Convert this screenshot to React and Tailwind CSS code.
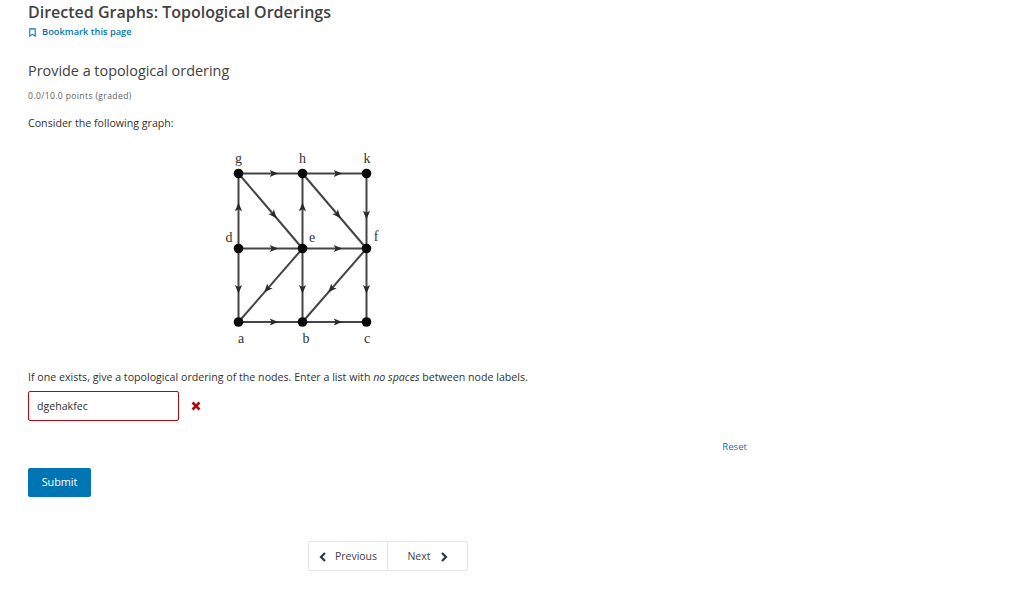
import React from "react";

const N = { g:[28.5,28.5], h:[92.5,28.5], k:[156.5,28.5], d:[28.5,103.5], e:[92.5,103.5], f:[156.5,103.5], a:[28.5,177], b:[92.5,177], c:[156.5,177] };
const E = ["gh","hk","ge","hf","kf","dg","eh","de","ef","da","ea","eb","fb","fc","ab","bc"];
const L = [["g",28.5,18],["h",92.5,18],["k",157,18],["d",19,97],["e",102,97],["f",166,96],["a",31,198],["b",96,198],["c",157,198]];

function Graph() {
  return (
    <svg width="190" height="210" viewBox="0 0 190 210" className="block">
      {E.map((s) => {
        const [x1, y1] = N[s[0]];
        const [x2, y2] = N[s[1]];
        const mx = x1 + (x2 - x1) * 0.55, my = y1 + (y2 - y1) * 0.55;
        const ang = (Math.atan2(y2 - y1, x2 - x1) * 180) / Math.PI;
        return (
          <g key={s}>
            <line x1={x1} y1={y1} x2={x2} y2={y2} stroke="#444" strokeWidth="2" />
            <path d="M4.5 0 L-4 -3.6 L-2 0 L-4 3.6 Z" fill="#2a2a2a" transform={`translate(${mx} ${my}) rotate(${ang})`} />
          </g>
        );
      })}
      {Object.entries(N).map(([k, [x, y]]) => <circle key={k} cx={x} cy={y} r="4.8" fill="#0a0a0a" />)}
      {L.map(([t, x, y]) => (
        <text key={t} x={x} y={y} textAnchor="middle" fontSize="14" fill="#333" fontFamily="'Liberation Serif', serif">{t}</text>
      ))}
    </svg>
  );
}

export default function App() {
  return (
    <div className="w-[1014px] h-[608px] bg-white overflow-hidden font-['Open_Sans',sans-serif]">
      <div className="w-[720px] ml-[28px]">
        <h1 className="m-0 text-[16px] leading-[24px] font-semibold text-[#414141]">Directed Graphs: Topological Orderings</h1>
        <div className="mt-[1px] flex items-center gap-[5px] h-[14px] text-[9.3px] font-semibold text-[#0075b4]">
          <svg width="9" height="9" viewBox="0 0 10 10" fill="none" stroke="#0075b4" strokeWidth="1.2"><path d="M2 1h6v8L5 7 2 9z" /></svg>
          <span>Bookmark this page</span>
        </div>
        <h2 className="mt-[22px] text-[14.4px] leading-[20px] font-normal text-[#414141]">Provide a topological ordering</h2>
        <div className="mt-[9px] text-[8.5px] leading-[12px] text-[#5e5e5e] tracking-[0.4px]">0.0/10.0 points (graded)</div>
        <p className="mt-[14px] text-[10.65px] leading-[14px] text-[#313131]">Consider the following graph:</p>
        <div className="mt-[15px] ml-[182px] h-[210px]"><Graph /></div>
        <p className="mt-[15px] text-[10.65px] leading-[14px] text-[#313131]">If one exists, give a topological ordering of the nodes. Enter a list with <em>no spaces</em> between node labels.</p>
        <div className="mt-[7px] flex items-center">
          <input readOnly value="dgehakfec" className="w-[151px] h-[30px] rounded-[2px] border border-[#b20610] bg-white px-[8px] text-[10.6px] text-[#313131] outline-none" />
          <svg className="ml-[12px]" width="10" height="10" viewBox="0 0 10 10" stroke="#b20610" strokeWidth="2.6"><path d="M1.5 1.5l7 7M8.5 1.5l-7 7" /></svg>
        </div>
        <div className="mt-[19px] flex justify-end text-[9.6px] leading-[14px] text-[#0075b4] pr-[1px]">Reset</div>
        <button className="block mt-[14px] w-[63px] h-[29px] rounded-[2px] bg-[#0075b4] text-white text-[10.8px]">Submit</button>
        <div className="mt-[44px] flex justify-center">
          <div className="flex h-[30px] w-[160px] pt-[1px] rounded-[2px] border border-[#e4e4e4] text-[10.5px] text-[#414141]">
            <div className="w-[79px] -mt-[1px] pt-[1px] flex items-center justify-center gap-[8px] border-r border-[#e4e4e4]">
              <svg width="8" height="10" viewBox="0 0 8 10" fill="none" stroke="#23374d" strokeWidth="2.2"><path d="M6 1L2 5l4 4" /></svg>
              <span>Previous</span>
            </div>
            <div className="flex-1 flex items-center justify-center gap-[9px]">
              <span>Next</span>
              <svg width="8" height="10" viewBox="0 0 8 10" fill="none" stroke="#23374d" strokeWidth="2.2"><path d="M2 1l4 4-4 4" /></svg>
            </div>
          </div>
        </div>
      </div>
    </div>
  );
}
